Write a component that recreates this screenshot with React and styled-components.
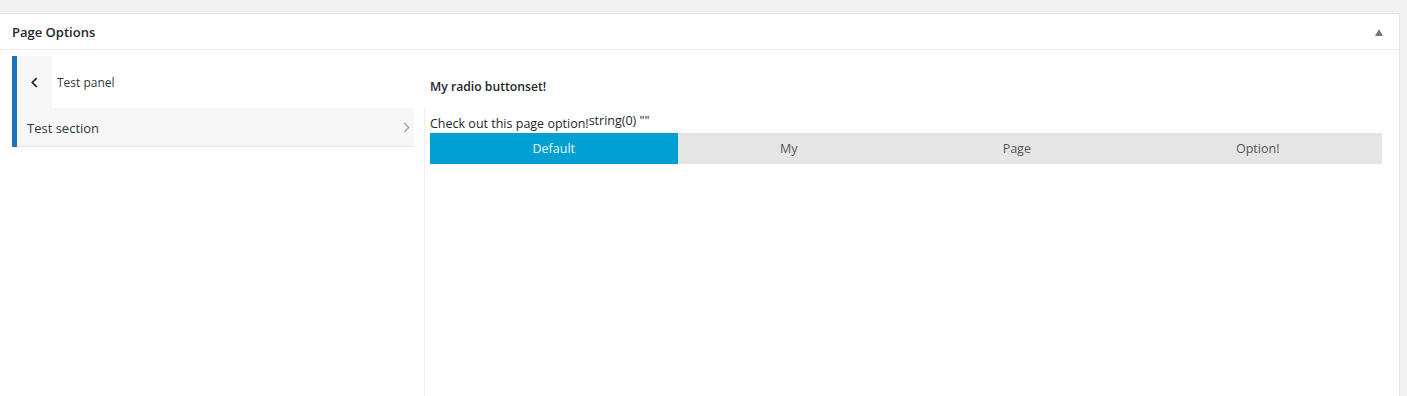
import React from "react";
import styled, { createGlobalStyle } from "styled-components";

const GlobalStyle = createGlobalStyle`
  html, body {
    margin: 0;
    padding: 0;
    background: #f1f1f1;
  }
  body {
    font-family: "Open Sans", "Noto Sans", sans-serif;
    color: #23282d;
  }
`;

const Page = styled.div`
  height: 396px;
  padding: 13px 7px 0 0;
  box-sizing: border-box;
  overflow: hidden;
`;

const Postbox = styled.div`
  height: 100%;
  background: #fff;
  border: 1px solid #e5e5e5;
  border-left: none;
  border-bottom: none;
  display: flex;
  flex-direction: column;
`;

const PostboxHeader = styled.div`
  height: 36px;
  flex: none;
  display: flex;
  align-items: center;
  justify-content: space-between;
  padding: 1px 16px 0 12px;
  box-sizing: border-box;
  border-bottom: 1px solid #eee;

  h2 {
    margin: 0;
    font-size: 13px;
    font-weight: 600;
    line-height: 1;
  }
`;

const Body = styled.div`
  flex: 1;
  display: flex;
  padding: 6px 17px 0 12px;
`;

const Sidebar = styled.div`
  width: 402px;
  box-sizing: border-box;
  flex: none;
  align-self: flex-start;
  border-left: 5px solid #1e72bd;
`;

const PanelTop = styled.div`
  display: flex;
  align-items: center;
  height: 52px;
`;

const BackButton = styled.div`
  width: 35px;
  height: 100%;
  background: #f7f7f7;
  display: flex;
  align-items: center;
  justify-content: center;
  color: #23282d;
`;

const PanelTitle = styled.div`
  padding-left: 5px;
  font-size: 12px;
  color: #32373c;
`;

const SectionRow = styled.div`
  height: 39px;
  display: flex;
  align-items: center;
  justify-content: space-between;
  padding: 1px 4px 0 10px;
  box-sizing: border-box;
  background: #f7f7f7;
  border-bottom: 1px solid #e4e4e4;
  font-size: 13px;
  color: #32373c;
`;

const Content = styled.div`
  flex: 1;
  display: flex;
  flex-direction: column;
  padding-left: 10px;
`;

const Heading = styled.div`
  padding: 21px 0 0 6px;
  margin-bottom: 11px;
  line-height: 20px;
  font-size: 12.2px;
  font-weight: 600;
`;

const Field = styled.div`
  flex: 1;
  border-left: 1px solid #eee;
  padding: 7px 0 0 5px;
`;

const Label = styled.div`
  font-size: 12.5px;
  line-height: 18px;
  color: #23282d;

  span {
    font-size: 12.5px;
    position: relative;
    top: -3px;
  }
`;

const ButtonSet = styled.div`
  display: flex;
  height: 31px;
`;

const SetButton = styled.div`
  flex: 1 1 auto;
  display: flex;
  align-items: center;
  justify-content: center;
  font-size: 12.5px;
  background: ${(p) => (p.$active ? "#00a0d2" : "#e5e5e5")};
  color: ${(p) => (p.$active ? "#eef8fb" : "#555")};
`;

function Chevron({ dir, color }) {
  const points = dir === "left" ? "5,1 1,5 5,9" : "1,1 5,5 1,9";
  return (
    <svg width="7" height="11" viewBox="0 0 6 10">
      <polyline points={points} fill="none" stroke={color} strokeWidth={dir === "left" ? 1.6 : 1.3} />
    </svg>
  );
}

const options = ["Default", "My", "Page", "Option!"];

export default function App() {
  return (
    <>
      <GlobalStyle />
      <Page>
        <Postbox>
          <PostboxHeader>
            <h2>Page Options</h2>
            <svg width="8" height="7" viewBox="0 0 8 7">
              <polygon points="4,0 8,7 0,7" fill="#72777c" />
            </svg>
          </PostboxHeader>
          <Body>
            <Sidebar>
              <PanelTop>
                <BackButton>
                  <Chevron dir="left" color="#23282d" />
                </BackButton>
                <PanelTitle>Test panel</PanelTitle>
              </PanelTop>
              <SectionRow>
                Test section
                <Chevron dir="right" color="#a0a5aa" />
              </SectionRow>
            </Sidebar>
            <Content>
              <Heading>My radio buttonset!</Heading>
              <Field>
                <Label>
                  Check out this page option!<span>string(0) ""</span>
                </Label>
                <ButtonSet>
                  {options.map((o, i) => (
                    <SetButton key={o} $active={i === 0}>
                      {o}
                    </SetButton>
                  ))}
                </ButtonSet>
              </Field>
            </Content>
          </Body>
        </Postbox>
      </Page>
    </>
  );
}
